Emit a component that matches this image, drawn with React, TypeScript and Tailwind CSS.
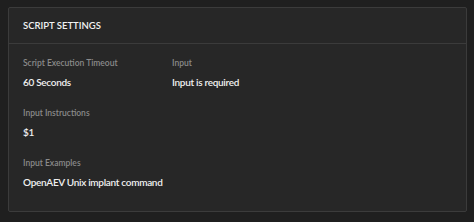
const fields = [
  [
    { label: "Script Execution Timeout", value: "60 Seconds" },
    { label: "Input", value: "Input is required" },
  ],
  [{ label: "Input Instructions", value: "$1" }],
  [{ label: "Input Examples", value: "OpenAEV Unix implant command" }],
];

export default function App() {
  return (
    <div className="w-[474px] h-[222px] bg-[#1f1f1f] pt-[7px] pl-[8px] font-['Lato',sans-serif]">
      <div className="w-[459px] h-[205px] bg-[#272727] border border-[#3b3b3b] rounded-[2px] flex flex-col">
        <div className="h-[36px] border-b border-[#3b3b3b] px-[14px] flex items-center">
          <h3 className="text-[9.5px] leading-[14px] font-semibold text-[#f2f2f2]">SCRIPT SETTINGS</h3>
        </div>
        <div className="px-[14px] pt-[13px] flex flex-col gap-[18px]">
          {fields.map((row, i) => (
            <div key={i} className="flex">
              {row.map((f) => (
                <div key={f.label} className="min-w-[149px] flex flex-col gap-[6px]">
                  <span className="text-[8.5px] leading-[12px] font-semibold text-[#8a8a8a]">{f.label}</span>
                  <span className="text-[10px] leading-[14px] font-semibold tracking-[-0.3px] text-[#f0f0f0] whitespace-nowrap">{f.value}</span>
                </div>
              ))}
            </div>
          ))}
        </div>
      </div>
    </div>
  );
}
